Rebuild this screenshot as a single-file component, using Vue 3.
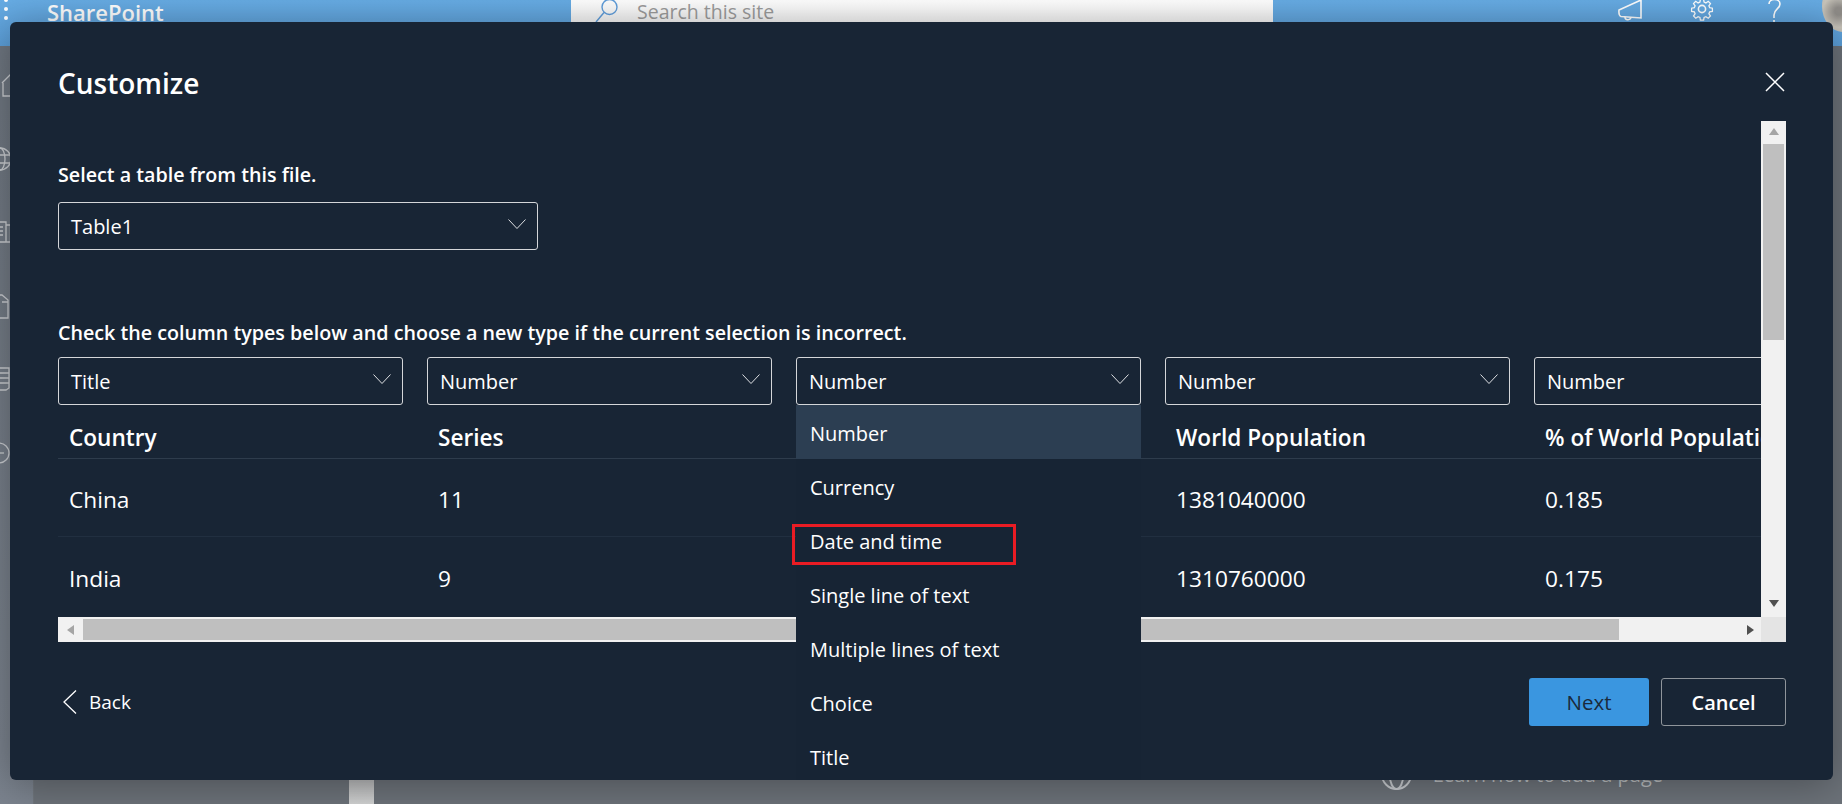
<script setup>
const columnTypes = ['Title', 'Number', 'Number', 'Number', 'Number']
const typeOptions = ['Number', 'Currency', 'Date and time', 'Single line of text', 'Multiple lines of text', 'Choice', 'Title']
const headers = ['Country', 'Series', '', 'World Population', '% of World Population']
const rows = [
  ['China', '11', '', '1381040000', '0.185'],
  ['India', '9', '', '1310760000', '0.175']
]
</script>

<template>
  <div class="page">
    <!-- SharePoint chrome behind the dialog -->
    <header class="topbar">
      <div class="kebab"><i></i><i></i><i></i></div>
      <span class="brand">SharePoint</span>
      <div class="search">
        <svg class="search-icon" viewBox="0 0 24 24" fill="none" stroke="#5f9ddb" stroke-width="1.4">
          <circle cx="14.5" cy="8" r="7.5" />
          <path d="M9 13.5 1 23" />
        </svg>
        <span>Search this site</span>
      </div>
      <div class="top-icons">
        <svg class="ic-mega" viewBox="0 0 24 22" fill="none" stroke="#fff" stroke-width="1.6">
          <path d="M1 11 23 1v18L3 17.5C1.500 17 .5 16 1 11Z" />
          <path d="M7 18c0 3.500 5 3.500 6 .8" />
        </svg>
        <svg class="ic-gear" viewBox="0 0 24 24" fill="none" stroke="#fff" stroke-width="1.6">
          <circle cx="12" cy="11" r="3.600" />
          <path d="M10 -1h4l.6 3.400 2.300 1 2.900-2 2.800 2.800-2 2.900 1 2.300 3.400.6v4l-3.400.6-1 2.300 2 2.900-2.800 2.800-2.900-2-2.300 1-.6 3.400h-4l-.6-3.400-2.300-1-2.900 2-2.800-2.800 2-2.900-1-2.300-3.400-.6v-4l3.400-.6 1-2.300-2-2.900 2.800-2.800 2.900 2 2.300-1Z" transform="translate(2.400 2.200) scale(.8)" />
        </svg>
        <svg class="ic-help" viewBox="0 0 14 24" fill="none" stroke="#fff" stroke-width="1.6">
          <path d="M2 5c0-6 11-6 11 0 0 5-6 5-6 11v3" />
          <path d="M7 21v2" />
        </svg>
      </div>
      <div class="avatar"></div>
    </header>

    <div class="site">
      <nav class="sidenav">
        <svg viewBox="0 0 24 24" fill="none" stroke="#c9ccd0" stroke-width="1.300"><path d="M2 10 12 0l9 9.500V23H3V10" /></svg>
        <svg viewBox="0 0 24 24" fill="none" stroke="#c9ccd0" stroke-width="1.300"><circle cx="0" cy="12" r="11" /><ellipse cx="0" cy="12" rx="5" ry="11" /><path d="M-11 8h22M-11 16h22" /></svg>
        <svg viewBox="0 0 24 24" fill="none" stroke="#c9ccd0" stroke-width="1.300"><path d="M-2 2H6V22H-2M6 5h4.500v17H6M-2 7h5M-2 11h5M-2 15h5" /></svg>
        <svg viewBox="0 0 24 24" fill="none" stroke="#c9ccd0" stroke-width="1.300"><path d="M-2 1H2L8 6V24H-2M2 8H8" /></svg>
        <svg viewBox="0 0 24 24" fill="none" stroke="#c9ccd0" stroke-width="1.300"><path d="M-2 1H9V21L6 23H-2M-2 6H9M-2 11H9M-2 16H9" /></svg>
        <svg viewBox="0 0 24 24" fill="none" stroke="#c9ccd0" stroke-width="1.300"><circle cx="-1" cy="12" r="10" /><path d="M-2 12H4" /></svg>
      </nav>
      <main class="content">
        <div class="page-stub"></div>
        <div class="learn">
          <svg viewBox="0 0 32 32" fill="none" stroke="#c9ccd0" stroke-width="2"><circle cx="16" cy="16" r="15" /><ellipse cx="16" cy="16" rx="7" ry="15" /></svg>
          <span>Learn how to add a page</span>
        </div>
      </main>
    </div>

    <!-- Customize dialog -->
    <section class="modal">
      <div class="modal-head">
        <h2>Customize</h2>
        <svg class="close" viewBox="0 0 20 20" fill="none" stroke="#fff" stroke-width="1.500"><path d="M1 1l18 18M19 1 1 19" /></svg>
      </div>

      <div class="scroll-shell">
        <div class="pane">
          <p class="label">Select a table from this file.</p>
          <div class="select table-select">
            <span>Table1</span>
            <svg class="chev" viewBox="0 0 18 10" fill="none" stroke="#dfe1e4" stroke-width="1"><path d="M.5.500 9 9.500 17.500.5" /></svg>
          </div>

          <p class="label second">Check the column types below and choose a new type if the current selection is incorrect.</p>
          <div class="col-grid">
            <div v-for="(t, i) in columnTypes" :key="i" class="select">
              <span>{{ t }}</span>
              <svg class="chev" viewBox="0 0 18 10" fill="none" stroke="#dfe1e4" stroke-width="1"><path d="M.5.500 9 9.500 17.500.5" /></svg>
            </div>
          </div>

          <div class="col-grid table-row table-head">
            <div v-for="(h, i) in headers" :key="i" class="cell">{{ h }}</div>
          </div>
          <div v-for="r in rows" :key="r[0]" class="col-grid table-row">
            <div v-for="(c, i) in r" :key="i" class="cell">{{ c }}</div>
          </div>
        </div>

        <div class="vbar">
          <i class="tri up"></i>
          <div class="vthumb"></div>
          <i class="tri down"></i>
        </div>
        <div class="hbar">
          <i class="tri left"></i>
          <div class="hthumb"></div>
          <i class="tri right"></i>
        </div>
        <div class="corner"></div>
      </div>

      <div class="modal-foot">
        <div class="back">
          <svg viewBox="0 0 14 24" fill="none" stroke="#fff" stroke-width="1.300"><path d="M13 .5 1 12l12 11.500" /></svg>
          <span>Back</span>
        </div>
        <button type="button" class="btn next">Next</button>
        <button type="button" class="btn cancel">Cancel</button>
      </div>

      <!-- open dropdown of the third column -->
      <ul class="menu">
        <li v-for="(o, i) in typeOptions" :key="o" :class="{ active: i === 0 }">{{ o }}</li>
      </ul>
      <div class="callout"></div>
    </section>
  </div>
</template>

<style>
html, body {
  margin: 0;
  background: #70777f;
}
</style>

<style scoped>
.page {
  position: relative;
  width: 1842px;
  height: 804px;
  overflow: hidden;
  font-family: "Open Sans", "Noto Sans", sans-serif;
  color: #fff;
  background: #6c7279;
}

/* top bar */
.topbar {
  display: flex;
  height: 46px;
  background: linear-gradient(#67ace4, #5c9fd9);
  position: relative;
}
.kebab {
  display: flex;
  flex-direction: column;
  gap: 5px;
  width: 47px;
  padding: 0 0 0 4px;
  margin-top: -2px;
  box-sizing: border-box;
}
.kebab i {
  width: 4px;
  height: 4px;
  border-radius: 50%;
  background: #fff;
}
.brand {
  width: 524px;
  font-size: 22px;
  font-weight: 600;
  line-height: 24px;
}
.search {
  display: flex;
  align-items: flex-start;
  width: 702px;
  background: linear-gradient(#fff, #ebebeb);
  color: #9c9c9c;
  font-size: 19.500px;
  line-height: 24px;
}
.search-icon {
  width: 24px;
  height: 24px;
  margin: -1px 18px 0 24px;
}
.top-icons {
  position: relative;
  flex: 1;
}
.top-icons svg {
  position: absolute;
}
.ic-mega { left: 345px; top: -1px; width: 24px; height: 22px; }
.ic-gear { left: 417px; top: -2px; width: 24px; height: 24px; }
.ic-help { left: 494px; top: -1px; width: 14px; height: 24px; }
.avatar {
  position: absolute;
  right: -22px;
  top: -20px;
  width: 42px;
  height: 52px;
  border-radius: 50%;
  background: radial-gradient(circle at 40% 60%, #8f8c88 0 10%, #c9c5bb 40%, #b6b2a8 100%);
}

/* page behind the dialog */
.site {
  display: flex;
  height: 758px;
}
.sidenav {
  display: flex;
  flex-direction: column;
  gap: 49.500px;
  width: 34px;
  padding-top: 27px;
  box-sizing: border-box;
  background: linear-gradient(#6e7680, #7b838e);
  border-right: 1px solid #70767d;
}
.sidenav svg {
  width: 24px;
  height: 24px;
  overflow: visible;
}
.content {
  flex: 1;
  display: flex;
  align-items: flex-end;
  justify-content: space-between;
}
.page-stub {
  width: 25px;
  height: 40px;
  margin-left: 315px;
  background: linear-gradient(#a3a4a6, #d2d3d3);
}
.learn {
  display: flex;
  align-items: center;
  gap: 21px;
  margin: 0 179px 14px 0;
  color: #b9bcbf;
  font-size: 20px;
}
.learn svg {
  width: 31px;
  height: 31px;
}

/* dialog */
.modal {
  position: absolute;
  left: 10px;
  top: 22px;
  width: 1823px;
  height: 758px;
  padding: 0 47px 0 48px;
  box-sizing: border-box;
  background: #182535;
  border-radius: 6px;
  box-shadow: 0 4px 40px rgba(0, 0, 0, 0.32);
}
.modal-head {
  display: flex;
  justify-content: space-between;
  height: 99px;
}
.modal-head h2 {
  margin: 42px 0 0;
  font-size: 28px;
  font-weight: 600;
  line-height: 38px;
}
.close {
  width: 20px;
  height: 20px;
  margin: 50px 1px 0 0;
}
.scroll-shell {
  display: grid;
  grid-template-columns: 1fr 25px;
  grid-template-rows: 496px 25px;
}
.pane {
  overflow: hidden;
  padding-top: 42px;
  box-sizing: border-box;
}
.label {
  margin: 0;
  font-size: 19.700px;
  font-weight: 600;
  line-height: 24px;
  white-space: nowrap;
}
.label.second {
  margin-top: 71px;
}
.select {
  display: flex;
  align-items: center;
  justify-content: space-between;
  height: 48px;
  padding: 0 11px 0 12px;
  box-sizing: border-box;
  border: 1px solid #d4d6d9;
  border-radius: 3px;
  font-size: 20px;
}
.table-select {
  width: 480px;
  margin-top: 15px;
}
.chev {
  width: 18px;
  height: 10px;
  margin-bottom: 4px;
}
.col-grid {
  display: grid;
  grid-template-columns: repeat(5, 345px);
  column-gap: 24px;
  margin-top: 12px;
}
.table-row {
  margin-top: 0;
  height: 78px;
  padding-top: 4px;
  box-sizing: border-box;
  align-items: center;
  border-bottom: 1px solid #212f40;
  font-size: 22.700px;
  white-space: nowrap;
}
.table-row:last-child {
  border-bottom: none;
}
.table-head {
  height: 54px;
  padding-top: 12px;
  border-bottom-color: #2e3c4c;
  font-size: 22.600px;
  font-weight: 600;
}
.cell {
  padding-left: 11px;
}

/* scrollbars */
.vbar {
  display: flex;
  flex-direction: column;
  align-items: center;
  background: #f1f1f1;
}
.vthumb {
  width: 21px;
  height: 196px;
  margin-top: 9px;
  background: #bfbfbf;
}
.tri {
  display: block;
  width: 0;
  height: 0;
  border: 5px solid transparent;
}
.tri.up {
  margin-top: 7px;
  border-top: none;
  border-bottom: 7px solid #a5a5a5;
}
.tri.down {
  margin-top: auto;
  margin-bottom: 10px;
  border-bottom: none;
  border-top: 7px solid #505050;
}
.hbar {
  display: flex;
  align-items: center;
  padding: 2px 0;
  box-sizing: border-box;
  background: #f1f1f1;
}
.tri.left {
  margin-left: 9px;
  border-left: none;
  border-right: 7px solid #a5a5a5;
}
.hthumb {
  width: 1536px;
  height: 21px;
  margin-left: 9px;
  background: #bfbfbf;
}
.tri.right {
  margin-left: auto;
  margin-right: 7px;
  border-right: none;
  border-left: 7px solid #505050;
}
.corner {
  background: #e4e4e4;
}

/* footer */
.modal-foot {
  display: flex;
  align-items: center;
  margin-top: 36px;
  height: 48px;
}
.back {
  display: flex;
  align-items: center;
  flex: 1;
  gap: 12px;
  padding-left: 5px;
  font-size: 19px;
}
.back svg {
  width: 14px;
  height: 24px;
}
.btn {
  height: 48px;
  border-radius: 3px;
  font-family: inherit;
}
.next {
  width: 120px;
  border: none;
  background: #3a96e0;
  color: #1a2a3c;
  font-size: 20.500px;
}
.cancel {
  width: 125px;
  margin-left: 12px;
  border: 1px solid #8f959b;
  background: transparent;
  color: #fff;
  font-size: 20px;
  font-weight: 600;
}

/* dropdown + annotation */
.menu {
  position: absolute;
  left: 786px;
  top: 383px;
  width: 345px;
  height: 375px;
  margin: 0;
  padding: 0;
  overflow: hidden;
  list-style: none;
  background: #172434;
  font-size: 20px;
}
.menu li {
  height: 54px;
  padding-left: 14px;
  line-height: 57px;
}
.menu li.active {
  background: #2c3e52;
}
.callout {
  position: absolute;
  left: 782px;
  top: 502px;
  width: 224px;
  height: 41px;
  box-sizing: border-box;
  border: 3px solid #ea1c24;
}
</style>
